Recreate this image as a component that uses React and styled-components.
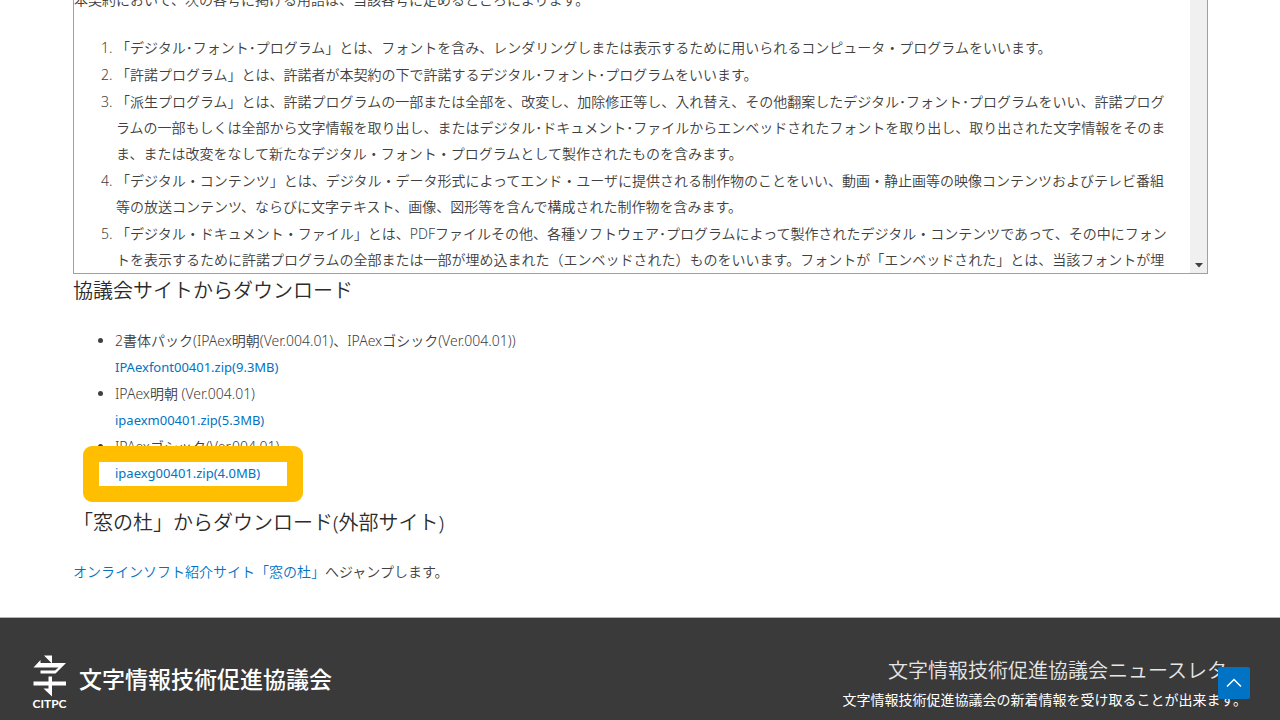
import React from "react";
import styled, { createGlobalStyle } from "styled-components";

const GlobalStyle = createGlobalStyle`
  * { box-sizing: border-box; }
  body {
    margin: 0;
    background: #fff;
    color: #404040;
    font-family: "Noto Sans", "Noto Sans CJK JP", sans-serif;
    font-size: 14px;
    font-weight: 350;
    line-height: 26px;
  }
`;

const Page = styled.div`
  height: 100vh;
  overflow: hidden;
`;

const Content = styled.main`
  padding: 0 72px 32px 73px;
`;

const License = styled.section`
  display: flex;
  height: 274px;
  overflow: hidden;
  border: 1px solid #a0a0a0;
  border-top: 0;
`;

const LicenseText = styled.div`
  flex: 1;
  min-width: 0;
  margin-top: -13px;
`;

const Paragraph = styled.p`
  margin: 0;
`;

const Terms = styled.ol`
  display: flex;
  flex-direction: column;
  gap: 1px;
  margin: 22px 0 0;
  padding-left: 42px;
  white-space: nowrap;
`;

const ScrollTrack = styled.div`
  display: flex;
  align-items: flex-end;
  justify-content: center;
  width: 17px;
  padding-bottom: 5px;
  background: #f0f0f0;
`;

const Heading = styled.h3`
  margin: 0;
  color: #2b2b2b;
  font-size: 20px;
  font-weight: 350;
  line-height: 34px;
`;

const Downloads = styled.ul`
  display: flex;
  flex-direction: column;
  gap: 1px;
  margin: 20px 0;
  padding-left: 42px;
`;

const Link = styled.a`
  color: #0073c4;
  text-decoration: none;
`;

const FileLink = styled(Link)`
  font-size: 13px;
  font-weight: 400;
`;

const Marked = styled.span`
  position: relative;
`;

const Marker = styled.span`
  position: absolute;
  top: -17px;
  left: -32px;
  width: 220px;
  height: 56px;
  border: 16px solid #ffbf00;
  border-radius: 9px;
  pointer-events: none;
`;

const Note = styled(Paragraph)`
  margin-top: 19px;
`;

const Footer = styled.footer`
  display: flex;
  justify-content: space-between;
  align-items: flex-start;
  min-height: 120px;
  padding: 36px 33px 0 32px;
  border-top: 1px solid #b4b4b4;
  background: #3a3a3a;
  color: #fff;
`;

const Brand = styled.a`
  display: flex;
  align-items: flex-start;
  gap: 12px;
  color: #fff;
  text-decoration: none;
`;

const Emblem = styled.span`
  display: flex;
  flex-direction: column;
  align-items: center;
  width: 35px;
`;

const EmblemLabel = styled.span`
  font-family: Lato, sans-serif;
  font-size: 12px;
  font-weight: 700;
  line-height: 14px;
`;

const BrandName = styled.span`
  padding-top: 7px;
  font-family: "Noto Sans CJK JP", sans-serif;
  font-size: 23px;
  font-weight: 500;
  line-height: 34px;
`;

const Newsletter = styled.section`
  padding-top: 1px;
  text-align: right;
  font-weight: 400;
`;

const NewsletterTitle = styled(Heading)`
  color: #e6e6e6;
  line-height: 32px;
`;

const TopButton = styled.button`
  position: fixed;
  right: 30px;
  bottom: 21px;
  display: flex;
  align-items: center;
  justify-content: center;
  width: 32px;
  height: 32px;
  padding: 0;
  border: 0;
  border-radius: 2px;
  background: #0073c4;
`;

const terms = [
  ["「デジタル･フォント･プログラム」とは、フォントを含み、レンダリングしまたは表示するために用いられるコンピュータ・プログラムをいいます。"],
  ["「許諾プログラム」とは、許諾者が本契約の下で許諾するデジタル･フォント･プログラムをいいます。"],
  [
    "「派生プログラム」とは、許諾プログラムの一部または全部を、改変し、加除修正等し、入れ替え、その他翻案したデジタル･フォント･プログラムをいい、許諾プログ",
    "ラムの一部もしくは全部から文字情報を取り出し、またはデジタル･ドキュメント･ファイルからエンベッドされたフォントを取り出し、取り出された文字情報をそのま",
    "ま、または改変をなして新たなデジタル・フォント・プログラムとして製作されたものを含みます。",
  ],
  [
    "「デジタル・コンテンツ」とは、デジタル・データ形式によってエンド・ユーザに提供される制作物のことをいい、動画・静止画等の映像コンテンツおよびテレビ番組",
    "等の放送コンテンツ、ならびに文字テキスト、画像、図形等を含んで構成された制作物を含みます。",
  ],
  [
    "「デジタル・ドキュメント・ファイル」とは、PDFファイルその他、各種ソフトウェア･プログラムによって製作されたデジタル・コンテンツであって、その中にフォン",
    "トを表示するために許諾プログラムの全部または一部が埋め込まれた（エンベッドされた）ものをいいます。フォントが「エンベッドされた」とは、当該フォントが埋",
  ],
];

export default function App() {
  return (
    <Page>
      <GlobalStyle />
      <Content>
        <License>
          <LicenseText>
            <Paragraph>本契約において、次の各号に掲げる用語は、当該各号に定めるところによります。</Paragraph>
            <Terms>
              {terms.map((lines) => (
                <li key={lines[0]}>
                  {lines.map((line, i) => (
                    <React.Fragment key={line}>
                      {i > 0 && <br />}
                      {line}
                    </React.Fragment>
                  ))}
                </li>
              ))}
            </Terms>
          </LicenseText>
          <ScrollTrack>
            <svg width="8" height="5" viewBox="0 0 8 5" aria-hidden="true">
              <path d="M0 0h8L4 4.5z" fill="#404040" />
            </svg>
          </ScrollTrack>
        </License>

        <Heading>協議会サイトからダウンロード</Heading>
        <Downloads>
          <li>
            2書体パック(IPAex明朝(Ver.004.01)、IPAexゴシック(Ver.004.01))
            <br />
            <FileLink href="#ipaexfont">IPAexfont00401.zip(9.3MB)</FileLink>
          </li>
          <li>
            IPAex明朝 (Ver.004.01)
            <br />
            <FileLink href="#ipaexm">ipaexm00401.zip(5.3MB)</FileLink>
          </li>
          <li>
            IPAexゴシック(Ver.004.01)
            <br />
            <Marked>
              <FileLink href="#ipaexg">ipaexg00401.zip(4.0MB)</FileLink>
              <Marker />
            </Marked>
          </li>
        </Downloads>

        <Heading>「窓の杜」からダウンロード(外部サイト)</Heading>
        <Note>
          <Link href="#madonomori">オンラインソフト紹介サイト「窓の杜」</Link>へジャンプします。
        </Note>
      </Content>

      <Footer>
        <Brand href="#home">
          <Emblem>
            <svg width="34" height="43" viewBox="0 0 34 43" fill="#fff" aria-hidden="true">
              <path d="M11 1.500H19V9H33L22.500 19.500H7.500V16.500H22L25.500 13.500H0.500L7.500 6V9H18.500Z" />
              <path d="M15.500 22.500H19V27.500H33V31.500H19V42.500L10.500 34.500H15.500V31.500H0.500V27.500H15.500Z" />
            </svg>
            <EmblemLabel>CITPC</EmblemLabel>
          </Emblem>
          <BrandName>文字情報技術促進協議会</BrandName>
        </Brand>
        <Newsletter>
          <NewsletterTitle>文字情報技術促進協議会ニュースレター</NewsletterTitle>
          <Paragraph>文字情報技術促進協議会の新着情報を受け取ることが出来ます。</Paragraph>
        </Newsletter>
      </Footer>

      <TopButton type="button" aria-label="ページの先頭へ">
        <svg width="16" height="10" viewBox="0 0 16 10" fill="none" stroke="#fff" strokeWidth="1.5" aria-hidden="true">
          <path d="M1 8.500L8 1.500L15 8.500" />
        </svg>
      </TopButton>
    </Page>
  );
}
